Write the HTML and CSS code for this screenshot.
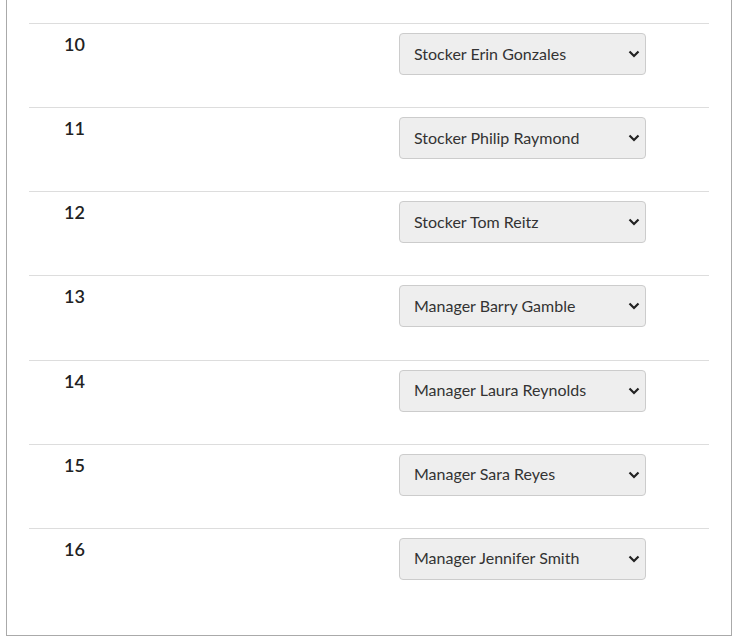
FILE: index.html
```html
<!DOCTYPE html>
<html lang="en">
<head>
    <meta charset="UTF-8">
    <meta name="viewport" content="width=device-width, initial-scale=1.0">
    <title>Shift Assignments</title>
    <link rel="stylesheet" href="styles.css">
</head>
<body>
    <div class="panel">
        <div class="assign-list">
            <div class="assign-row">
                <span class="slot-num">10</span>
                <div class="select-wrap">
                    <select class="staff-select">
                        <option>Stocker Erin Gonzales</option>
                    </select>
                    <svg class="chevron" width="12" height="8" viewBox="0 0 12 8"><polyline points="1.5,1.5 6,6 10.5,1.5" /></svg>
                </div>
            </div>
            <div class="assign-row">
                <span class="slot-num">11</span>
                <div class="select-wrap">
                    <select class="staff-select">
                        <option>Stocker Philip Raymond</option>
                    </select>
                    <svg class="chevron" width="12" height="8" viewBox="0 0 12 8"><polyline points="1.5,1.5 6,6 10.5,1.5" /></svg>
                </div>
            </div>
            <div class="assign-row">
                <span class="slot-num">12</span>
                <div class="select-wrap">
                    <select class="staff-select">
                        <option>Stocker Tom Reitz</option>
                    </select>
                    <svg class="chevron" width="12" height="8" viewBox="0 0 12 8"><polyline points="1.5,1.5 6,6 10.5,1.5" /></svg>
                </div>
            </div>
            <div class="assign-row">
                <span class="slot-num">13</span>
                <div class="select-wrap">
                    <select class="staff-select">
                        <option>Manager Barry Gamble</option>
                    </select>
                    <svg class="chevron" width="12" height="8" viewBox="0 0 12 8"><polyline points="1.5,1.5 6,6 10.5,1.5" /></svg>
                </div>
            </div>
            <div class="assign-row">
                <span class="slot-num">14</span>
                <div class="select-wrap">
                    <select class="staff-select">
                        <option>Manager Laura Reynolds</option>
                    </select>
                    <svg class="chevron" width="12" height="8" viewBox="0 0 12 8"><polyline points="1.5,1.5 6,6 10.5,1.5" /></svg>
                </div>
            </div>
            <div class="assign-row">
                <span class="slot-num">15</span>
                <div class="select-wrap">
                    <select class="staff-select">
                        <option>Manager Sara Reyes</option>
                    </select>
                    <svg class="chevron" width="12" height="8" viewBox="0 0 12 8"><polyline points="1.5,1.5 6,6 10.5,1.5" /></svg>
                </div>
            </div>
            <div class="assign-row">
                <span class="slot-num">16</span>
                <div class="select-wrap">
                    <select class="staff-select">
                        <option>Manager Jennifer Smith</option>
                    </select>
                    <svg class="chevron" width="12" height="8" viewBox="0 0 12 8"><polyline points="1.5,1.5 6,6 10.5,1.5" /></svg>
                </div>
            </div>
        </div>
    </div>
</body>
</html>
```

FILE: styles.css
```css
/* Global Styles */
body {
    font-family: Lato, 'Open Sans', sans-serif;
    margin: 0;
    padding: 0;
    background-color: #ffffff;
    color: #333;
}

.panel {
    width: 726px;
    margin-left: 6px;
    box-sizing: border-box;
    border: 1px solid #aaa;
    border-top: none;
    padding: 23px 22px 23px 22px;
}

/* Rows */
.assign-row {
    display: grid;
    grid-template-columns: 370px 1fr;
    align-items: start;
    height: 84.17px;
    box-sizing: border-box;
    border-top: 1px solid #ddd;
    padding-top: 9px;
}

.slot-num {
    padding-left: 35px;
    font-size: 18px;
    font-weight: 600;
    color: #222;
}

.select-wrap {
    position: relative;
    width: 247px;
    height: 42px;
}

.staff-select {
    appearance: none;
    -webkit-appearance: none;
    width: 247px;
    height: 42px;
    padding: 0 30px 2px 14px;
    font-family: Lato, 'Open Sans', sans-serif;
    font-size: 16px;
    color: #333;
    background-color: #eee;
    border: 1px solid #ccc;
    border-radius: 4px;
}

.chevron {
    position: absolute;
    right: 6px;
    top: 17px;
    pointer-events: none;
}

.chevron polyline {
    fill: none;
    stroke: #222;
    stroke-width: 2.2;
}
```
